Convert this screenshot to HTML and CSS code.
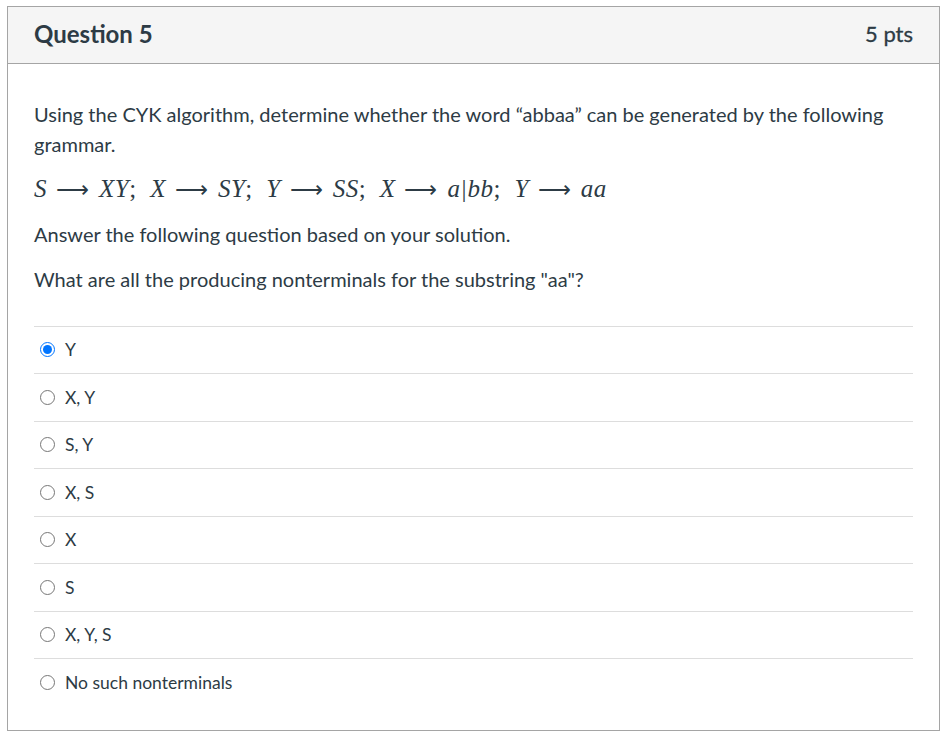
FILE: index.html
```html
<!DOCTYPE html>
<html>
<head>
<meta charset="utf-8">
<link rel="stylesheet" href="styles.css">
</head>
<body>
<div class="question">
  <div class="q-header">
    <span class="q-title">Question 5</span>
    <span class="q-pts">5 pts</span>
  </div>
  <div class="q-body">
    <p class="q-text">Using the CYK algorithm, determine whether the word “abbaa” can be generated by the following grammar.</p>
    <p class="q-math"><i>S</i><span class="arr">⟶</span><i>XY</i><span class="semi">;</span><i>X</i><span class="arr">⟶</span><i>SY</i><span class="semi">;</span><i>Y</i><span class="arr">⟶</span><i>SS</i><span class="semi">;</span><i>X</i><span class="arr">⟶</span><i>a</i><span class="bar">|</span><i>bb</i><span class="semi">;</span><i>Y</i><span class="arr">⟶</span><i>aa</i></p>
    <p class="q-text">Answer the following question based on your solution.</p>
    <p class="q-text">What are all the producing nonterminals for the substring "aa"?</p>
    <div class="answers">
      <label class="answer"><input type="radio" name="a" checked><span>Y</span></label>
      <label class="answer"><input type="radio" name="a"><span>X, Y</span></label>
      <label class="answer"><input type="radio" name="a"><span>S, Y</span></label>
      <label class="answer"><input type="radio" name="a"><span>X, S</span></label>
      <label class="answer"><input type="radio" name="a"><span>X</span></label>
      <label class="answer"><input type="radio" name="a"><span>S</span></label>
      <label class="answer"><input type="radio" name="a"><span>X, Y, S</span></label>
      <label class="answer"><input type="radio" name="a"><span>No such nonterminals</span></label>
    </div>
  </div>
</div>
</body>
</html>
```
FILE: styles.css
```css
html, body {
  margin: 0;
  padding: 0;
  background: #fff;
}
body {
  padding: 6px 0 0 7px;
  font-family: Lato, "Liberation Sans", sans-serif;
  color: #2d3b45;
}
.question {
  width: 931px;
  height: 723px;
  border: 1px solid #a5a5a5;
}
.q-header {
  height: 57px;
  box-sizing: border-box;
  background: #f5f5f5;
  border-bottom: 1px solid #a5a5a5;
  display: flex;
  justify-content: space-between;
  align-items: center;
  padding: 0 26px 3px 26px;
  font-size: 24px;
  font-weight: 700;
}
.q-pts {
  font-size: 22px;
  font-weight: 400;
  -webkit-text-stroke: 0.3px #2d3b45;
}
.q-body {
  padding: 35px 26px 0 26px;
}
.q-text {
  margin: 0 0 15px 0;
  font-size: 20px;
  line-height: 30px;
}
.q-math {
  margin: 0 0 15px 0;
  height: 30px;
  font-family: "Liberation Serif", serif;
  font-size: 25px;
  line-height: 30px;
  white-space: nowrap;
}
.q-math i {
  font-style: italic;
  letter-spacing: 0.5px;
}
.arr {
  font-size: 23px;
  margin: 0 10px 0 9px;
}
.semi {
  margin-right: 14px;
}
.bar {
  margin: 0 1px;
}
.answers {
  margin-top: 31.5px;
  border-top: 1px solid #ddd;
}
.answer {
  display: flex;
  align-items: center;
  height: 46.5px;
  border-bottom: 1px solid #ddd;
  font-size: 17.5px;
}
.answer:last-child {
  border-bottom: none;
}
.answer input {
  width: 15px;
  height: 15px;
  margin: 0 10px 0 6px;
}
```
